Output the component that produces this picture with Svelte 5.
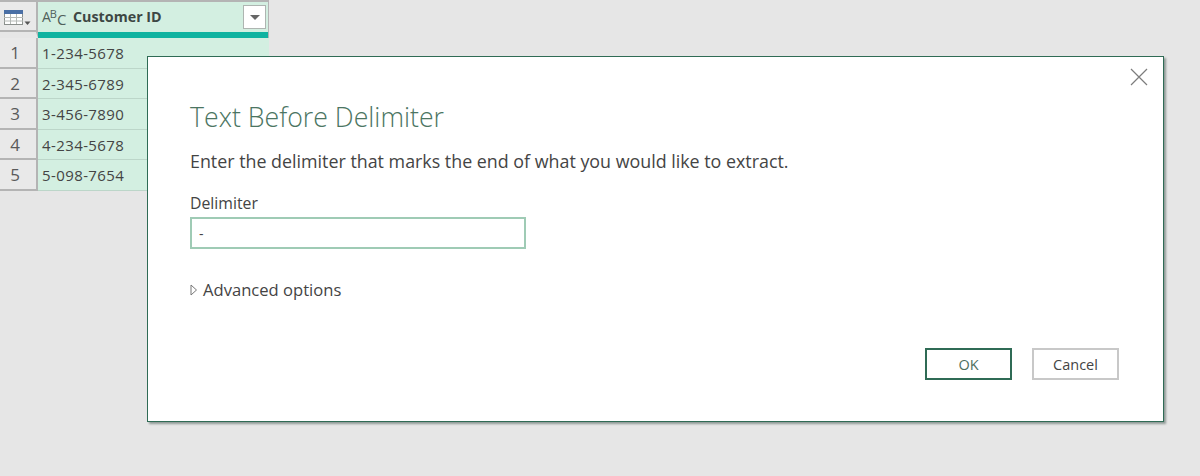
<script lang="ts">
  // Power Query style dialog over a small preview table.
  const rows = ["1-234-5678", "2-345-6789", "3-456-7890", "4-234-5678", "5-098-7654"];
  let delimiter = $state("-");
</script>

<div class="page">
  <div class="table">
    <div class="corner">
      <svg width="32" height="20" viewBox="0 0 32 20">
        <rect x="4.500" y="3.500" width="18" height="14" fill="#fff" stroke="#8a8f8c" />
        <rect x="4" y="3" width="19" height="4" fill="#4a6fa5" />
        <path d="M4 10.500h19M4 14h19M10.500 7v10M16.500 7v10" stroke="#b5b9b6" fill="none" />
        <path d="M24.500 14.500h6l-3 3.500z" fill="#555" />
      </svg>
    </div>
    <div class="head">
      <span class="type"><span>A</span><sup>B</sup><sub>C</sub></span>
      <span class="name">Customer ID</span>
      <span class="drop"><i></i></span>
    </div>
    {#each rows as r, i}
      <div class="num">{i + 1}</div>
      <div class="cell">{r}</div>
    {/each}
  </div>

  <div class="dialog">
    <button class="close" aria-label="Close">
      <svg width="18" height="18" viewBox="0 0 18 18">
        <path d="M1 1l16 16M17 1L1 17" stroke="#7d7d7d" stroke-width="1.200" fill="none" />
      </svg>
    </button>
    <h1>Text Before Delimiter</h1>
    <p>Enter the delimiter that marks the end of what you would like to extract.</p>
    <label for="delim">Delimiter</label>
    <input id="delim" bind:value={delimiter} />
    <div class="adv">
      <svg width="8" height="12" viewBox="0 0 8 12">
        <path d="M1 1l5.500 5L1 11z" fill="#fff" stroke="#777" />
      </svg>
      <span>Advanced options</span>
    </div>
    <div class="actions">
      <button class="btn ok">OK</button>
      <button class="btn">Cancel</button>
    </div>
  </div>
</div>

<style>
  :global(body) {
    margin: 0;
    background: #e6e6e6;
  }
  .page {
    position: relative;
    width: 1200px;
    height: 476px;
    overflow: hidden;
    background: #e6e6e6;
    font-family: "Open Sans", "Noto Sans", sans-serif;
    color: #444;
  }
  .table {
    display: grid;
    grid-template-columns: 38px 231px;
    grid-template-rows: 38px repeat(5, 30.5px);
    width: 269px;
  }
  .corner {
    box-sizing: border-box;
    border-top: 2px solid #b4b4b4;
    border-right: 2px solid #b4b4b4;
    border-bottom: 6px solid #e6e6e6;
    box-shadow: inset 0 -2px 0 #b4b4b4;
    background: #e9e9e9;
    display: flex;
    align-items: center;
  }
  .head {
    box-sizing: border-box;
    background: linear-gradient(#d3efe1 30px, #0fb3a0 30px);
    border-top: 2px solid #b4b4b4;
    border-right: 1px solid #b4b4b4;
    display: flex;
    align-items: flex-start;
    padding: 0 2px 0 4px;
    position: relative;
  }
  .type {
    font-size: 14px;
    line-height: 30px;
    color: #50605a;
    width: 31px;
    flex: none;
    letter-spacing: -1px;
  }
  .type sup {
    font-size: 11px;
    vertical-align: 4px;
    line-height: 0;
  }
  .type sub {
    font-size: 15px;
    vertical-align: -3px;
    line-height: 0;
    margin-left: 1px;
  }
  .name {
    font-size: 14.3px;
    font-weight: 700;
    line-height: 30px;
    color: #3d4744;
    flex: 1;
  }
  .drop {
    box-sizing: border-box;
    width: 23px;
    height: 24px;
    margin-top: 3px;
    background: #fff;
    border: 1px solid #aeb5b1;
    display: flex;
    align-items: center;
    justify-content: center;
  }
  .drop i {
    width: 0;
    height: 0;
    border-left: 5px solid transparent;
    border-right: 5px solid transparent;
    border-top: 5px solid #666;
  }
  .num {
    box-sizing: border-box;
    background: #e9e9e9;
    border-right: 2px solid #b4b4b4;
    border-bottom: 2px solid #b4b4b4;
    padding-right: 16px;
    text-align: right;
    font-size: 17px;
    line-height: 30px;
    color: #5a5a5a;
  }
  .cell {
    box-sizing: border-box;
    background: #d3efe1;
    border-bottom: 1px solid #bcd6c9;
    padding-left: 4px;
    font-size: 15px;
    line-height: 30px;
    color: #444;
    letter-spacing: 0.4px;
  }
  .dialog {
    box-sizing: border-box;
    position: absolute;
    left: 147px;
    top: 56px;
    width: 1017px;
    height: 366px;
    background: #fff;
    border: 1px solid #2f6b55;
    box-shadow: 2px 2px 2px #8f9a96;
    padding: 39px 42px 0;
  }
  .close {
    position: absolute;
    top: 11px;
    right: 15px;
    padding: 0;
    width: 18px;
    height: 18px;
    border: 0;
    background: none;
  }
  h1 {
    margin: 0;
    font-size: 26.7px;
    font-weight: 300;
    line-height: 42px;
    color: #4b7562;
  }
  p {
    margin: 10px 0 0;
    font-size: 17.85px;
    line-height: 26px;
    color: #444;
  }
  label {
    display: block;
    margin-top: 17px;
    font-size: 15.8px;
    line-height: 24px;
    color: #444;
  }
  input {
    display: block;
    box-sizing: border-box;
    margin-top: 2px;
    width: 336px;
    height: 32px;
    padding: 0 7px;
    border: 2px solid #9fcbb5;
    outline: 0;
    font: 14px "Open Sans", "Noto Sans", sans-serif;
    color: #444;
  }
  .adv {
    display: flex;
    align-items: center;
    gap: 5px;
    margin-top: 29px;
    font-size: 16.6px;
    line-height: 24px;
    color: #444;
  }
  .actions {
    display: flex;
    justify-content: flex-end;
    gap: 20px;
    margin-top: 46px;
    margin-right: 2px;
  }
  .btn {
    box-sizing: border-box;
    width: 87px;
    height: 32px;
    padding: 0;
    background: #fff;
    border: 2px solid #c8c8c8;
    font: 14.5px "Open Sans", "Noto Sans", sans-serif;
    color: #444;
  }
  .ok {
    border-color: #2f6b55;
    color: #4f6f5f;
  }
</style>
